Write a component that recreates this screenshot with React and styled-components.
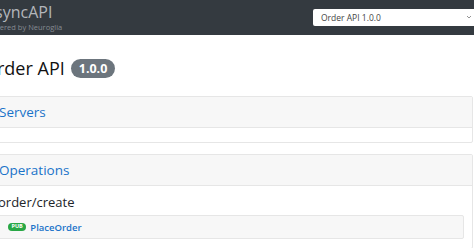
import React from "react";
import styled, { createGlobalStyle } from "styled-components";

const GlobalStyle = createGlobalStyle`
  html, body {
    margin: 0;
    padding: 0;
    background: #fff;
    overflow: hidden;
  }
  body {
    font-family: "Open Sans", "Noto Sans", sans-serif;
    color: #212529;
  }
`;

const Page = styled.div`
  width: 474px;
  height: 248px;
  overflow: hidden;
`;

const TopBar = styled.header`
  height: 35px;
  background: #343a40;
  display: flex;
  align-items: center;
  justify-content: space-between;
  overflow: hidden;
`;

const Brand = styled.div`
  margin-left: -15px;
  display: flex;
  flex-direction: column;
  line-height: 1;
`;

const BrandName = styled.span`
  font-size: 16px;
  line-height: 17px;
  color: #b3b6bb;
  margin-top: 1px;
`;

const BrandSub = styled.span`
  font-size: 7.5px;
  line-height: 9px;
  color: #868b92;
  margin-top: 2px;
`;

const Select = styled.div`
  width: 172px;
  height: 17px;
  margin-right: -11px;
  margin-top: -1px;
  background: #fff;
  border-radius: 2px;
  display: flex;
  align-items: center;
  justify-content: space-between;
  padding: 0 0 0 8px;
  box-sizing: border-box;
  font-size: 8.5px;
  color: #444;
`;

const Chevron = styled.svg`
  width: 6px;
  height: 6px;
  margin-right: 13px;
`;

const Main = styled.main`
  margin-left: -17px;
  width: 490px;
  padding-top: 22px;
`;

const Title = styled.h1`
  margin: 0 0 17px 0;
  display: flex;
  align-items: center;
  gap: 6px;
  font-size: 18px;
  font-weight: 400;
  line-height: 22px;
  color: #111;
`;

const Badge = styled.span`
  display: inline-flex;
  align-items: center;
  justify-content: center;
  height: 19px;
  padding: 0 8px;
  border-radius: 10px;
  background: #6c757d;
  color: #fff;
  font-size: 12.5px;
  font-weight: 700;
  margin-top: 1px;
`;

const Card = styled.section`
  border: 1px solid #e6e6e6;
  border-radius: 2px;
  margin-bottom: 11px;
`;

const CardHeader = styled.div`
  height: 30px;
  display: flex;
  align-items: center;
  padding: 0 15px;
  background: #f7f7f7;
  border-bottom: 1px solid #e6e6e6;
  font-size: 13.5px;
  color: #1a73c9;
`;

const CardBody = styled.div`
  padding: ${(p) => (p.$empty ? "14px 0 0 0" : "7px 8px 9px 14px")};
`;

const ChannelName = styled.div`
  font-size: 13px;
  font-weight: 500;
  line-height: 18px;
  margin-bottom: 4px;
`;

const OperationRow = styled.div`
  height: 22px;
  display: flex;
  align-items: center;
  gap: 4px;
  padding-left: 9px;
  background: #f7f7f7;
  border: 1px solid #e6e6e6;
  border-radius: 2px;
`;

const Pill = styled.span`
  display: inline-flex;
  align-items: center;
  justify-content: center;
  height: 8px;
  padding: 0 3.5px;
  border-radius: 4px;
  background: #28a745;
  color: #fff;
  font-size: 5.5px;
  font-weight: 700;
  line-height: 1;
`;

const OperationLink = styled.a`
  font-size: 9.5px;
  font-weight: 600;
  color: #1a73c9;
  text-decoration: none;
`;

export default function App() {
  return (
    <Page>
      <GlobalStyle />
      <TopBar>
        <Brand>
          <BrandName>AsyncAPI</BrandName>
          <BrandSub>Powered by Neuroglia</BrandSub>
        </Brand>
        <Select>
          <span>Order API 1.0.0</span>
          <Chevron viewBox="0 0 12 12">
            <path d="M2 4l4 4 4-4" fill="none" stroke="#666" strokeWidth="1.4" />
          </Chevron>
        </Select>
      </TopBar>
      <Main>
        <Title>
          Order API <Badge>1.0.0</Badge>
        </Title>
        <Card>
          <CardHeader>Servers</CardHeader>
          <CardBody $empty />
        </Card>
        <Card>
          <CardHeader>Operations</CardHeader>
          <CardBody>
            <ChannelName>order/create</ChannelName>
            <OperationRow>
              <Pill>PUB</Pill>
              <OperationLink href="#">PlaceOrder</OperationLink>
            </OperationRow>
          </CardBody>
        </Card>
      </Main>
    </Page>
  );
}
